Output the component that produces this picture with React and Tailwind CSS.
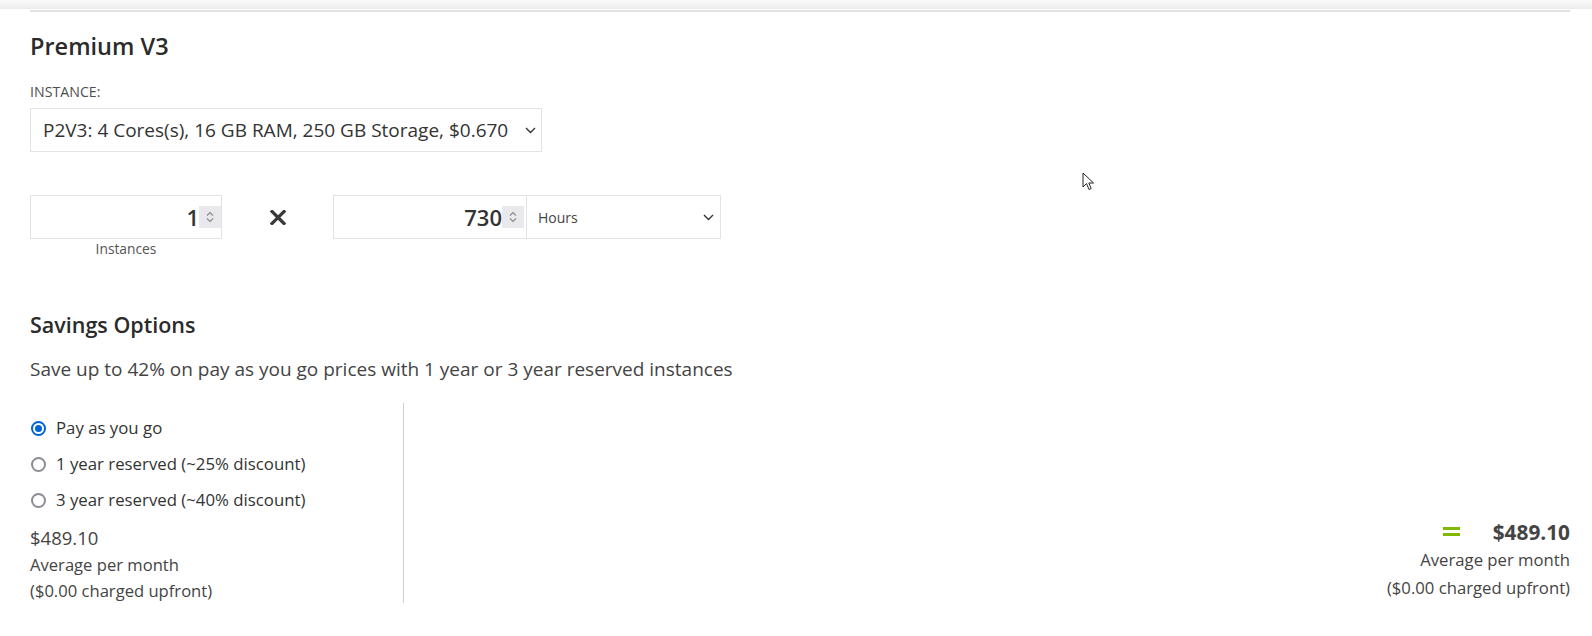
import React from "react";

function Spinner() {
  return (
    <div className="w-[22px] h-[22px] bg-[#e9e9ed] flex flex-col items-center justify-center gap-[2px] shrink-0">
      <svg width="8" height="5" viewBox="0 0 8 5"><path d="M1 4.5 L4 1.5 L7 4.5" fill="none" stroke="#8a8a8a" strokeWidth="1.1" /></svg>
      <svg width="8" height="5" viewBox="0 0 8 5"><path d="M1 0.5 L4 3.5 L7 0.5" fill="none" stroke="#8a8a8a" strokeWidth="1.1" /></svg>
    </div>
  );
}

function Chevron({ className = "" }) {
  return (
    <svg className={className} width="11" height="7" viewBox="0 0 11 7">
      <path d="M1 1 L5.5 5.5 L10 1" fill="none" stroke="#333" strokeWidth="1.4" />
    </svg>
  );
}

function Radio({ checked, label }) {
  return (
    <div className="flex items-center h-[36px]">
      {checked ? (
        <div className="w-[15px] h-[15px] rounded-full border-[2px] border-[#0064d8] flex items-center justify-center ml-[1px]">
          <div className="w-[7px] h-[7px] rounded-full bg-[#0064d8]" />
        </div>
      ) : (
        <div className="w-[15px] h-[15px] rounded-full border-[2px] border-[#8c8c94] ml-[1px]" />
      )}
      <span className="ml-[10px] text-[16.8px] text-[#333]">{label}</span>
    </div>
  );
}

export default function App() {
  return (
    <div
      className="relative w-full h-[636px] bg-white overflow-hidden"
      style={{ fontFamily: '"Open Sans", "Noto Sans", sans-serif' }}
    >
      <div className="h-[9px] bg-gradient-to-b from-[#fbfbfb] to-[#ebebeb]" />
      <div className="pl-[30px] pr-[22px]">
        <div className="mt-[1px] h-[2px] bg-[#e2e2e2]" />
        <h2 className="mt-[18px] text-[23.5px] leading-[32px] font-semibold text-[#2b2b2b]">Premium V3</h2>
        <div className="mt-[21px] text-[14.2px] leading-[18px] text-[#505050] uppercase">Instance:</div>
        <div className="mt-[7px] w-[512px] h-[44px] border border-[#e3e3e3] flex items-center pl-[12px] pr-[5px]">
          <span className="flex-1 text-[19px] text-[#333] whitespace-nowrap">P2V3: 4 Cores(s), 16 GB RAM, 250 GB Storage, $0.670</span>
          <Chevron />
        </div>

        <div className="mt-[43px] flex items-start">
          <div className="flex flex-col items-center">
            <div className="w-[192px] h-[44px] border border-[#e3e3e3] flex items-center justify-end">
              <span className="text-[22px] font-semibold text-[#333] leading-none">1</span>
              <Spinner />
            </div>
            <div className="text-[13.8px] leading-[18px] text-[#555] mt-[1px]">Instances</div>
          </div>
          <div className="w-[111px] h-[44px] flex items-center justify-center">
            <svg width="16" height="15" viewBox="0 0 16 15">
              <path d="M2 1.5 L14 13.5 M14 1.5 L2 13.5" stroke="#3a3a3a" strokeWidth="3.2" strokeLinecap="square" />
            </svg>
          </div>
          <div className="flex">
            <div className="w-[194px] h-[44px] border border-[#e3e3e3] flex items-center justify-end pr-[2px]">
              <span className="text-[22px] font-semibold text-[#333] leading-none">730</span>
              <Spinner />
            </div>
            <div className="w-[194px] h-[44px] border border-l-0 border-[#e3e3e3] flex items-center pl-[11px] pr-[6px]">
              <span className="flex-1 text-[14px] text-[#444]">Hours</span>
              <Chevron />
            </div>
          </div>
        </div>

        <h3 className="mt-[53px] text-[21.5px] leading-[28px] font-semibold text-[#2b2b2b]">Savings Options</h3>
        <p className="mt-[18px] text-[19px] leading-[24px] text-[#444]">
          Save up to 42% on pay as you go prices with 1 year or 3 year reserved instances
        </p>

        <div className="mt-[22px] flex h-[200px]">
          <div className="w-[374px] border-r border-[#cfcfcf] pt-[7px]">
            <Radio checked label="Pay as you go" />
            <Radio label="1 year reserved (~25% discount)" />
            <Radio label="3 year reserved (~40% discount)" />
            <div className="mt-[7px] text-[18.5px] leading-[26px] text-[#444]">$489.10</div>
            <div className="text-[16.6px] leading-[27px] text-[#444]">Average per month</div>
            <div className="text-[16.6px] leading-[26px] text-[#444]">($0.00 charged upfront)</div>
          </div>
          <div className="flex-1 flex flex-col items-end justify-end pb-[2px]">
            <div className="flex items-center">
              <svg width="17" height="10" viewBox="0 0 17 10" className="mr-[33px]">
                <rect x="0" y="0" width="17" height="3" fill="#7fba00" />
                <rect x="0" y="6" width="17" height="3" fill="#7fba00" />
              </svg>
              <span className="text-[20.8px] leading-[28px] font-bold text-[#444]">$489.10</span>
            </div>
            <div className="text-[16.7px] leading-[28px] text-[#444]">Average per month</div>
            <div className="text-[16.7px] leading-[27px] text-[#444]">($0.00 charged upfront)</div>
          </div>
        </div>
      </div>

      <svg className="absolute left-[1082px] top-[172px]" width="13" height="20" viewBox="0 0 13 20">
        <path d="M1 1 L1 15 L4.5 11.5 L7 17.5 L9.2 16.5 L6.8 11 L11.5 11 Z" fill="#fff" stroke="#222" strokeWidth="1" strokeLinejoin="round" />
      </svg>
    </div>
  );
}
